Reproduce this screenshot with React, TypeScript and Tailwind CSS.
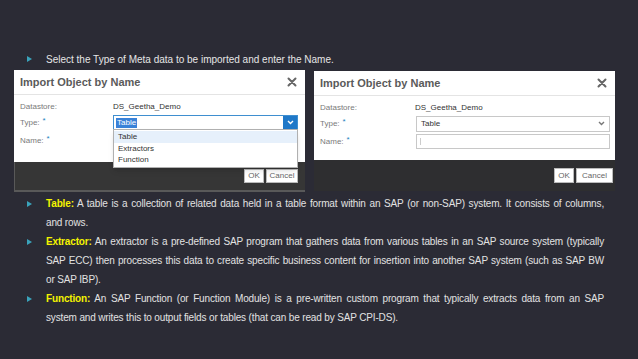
import React from 'react'

const font = { fontFamily: '"Liberation Sans", Arial, sans-serif' }

function Arrow() {
  return (
    <svg width="5" height="6" viewBox="0 0 5 6" className="shrink-0">
      <path d="M0 0 L5 3 L0 6 Z" fill="#3aa3bb" />
    </svg>
  )
}

function Close() {
  return (
    <svg width="10" height="10" viewBox="0 0 10 10">
      <path d="M1.5 1.5 L8.5 8.5 M8.5 1.5 L1.5 8.5" stroke="#666" strokeWidth="2" strokeLinecap="round" />
    </svg>
  )
}

function Chevron({ color }: { color: string }) {
  return (
    <svg width="7" height="5" viewBox="0 0 7 5">
      <path d="M1 1 L3.5 3.5 L6 1" stroke={color} strokeWidth="1.4" fill="none" />
    </svg>
  )
}

function Star() {
  return <span className="text-[#1f7fc0] text-[8px] ml-[3px] relative -top-[2px]">*</span>
}

function Dialog({ open }: { open: boolean }) {
  return (
    <div className={open ? 'w-[291px] flex flex-col' : 'w-[301px] flex flex-col mt-[1px]'}>
      <div className={open ? 'bg-white h-[92px] flex flex-col relative' : 'bg-white h-[89px] flex flex-col relative'}>
        <div className="h-[25px] flex items-center justify-between pl-[6px] pr-[8px] border-b border-[#e4e4e4]">
          <span className="text-[11px] font-bold text-[#5a5a5a]">Import Object by Name</span>
          <Close />
        </div>
        <div className="flex flex-col pl-[6px] pt-[5px] text-[8px] text-[#7a7a7a]">
          <div className="flex items-center h-[13px]">
            <span className={open ? 'w-[93px]' : 'w-[95px]'}>Datastore:</span>
            <span className="text-[#333]">DS_Geetha_Demo</span>
          </div>
          <div className="flex items-center h-[17px] mt-[1px]">
            <span className={open ? 'w-[93px]' : 'w-[96px]'}>
              Type:<Star />
            </span>
            {open ? (
              <div className="w-[185px] h-[15px] border border-[#3f8fd0] flex items-center justify-between">
                <span className="bg-[#3a82d8] text-white px-[1px] ml-[2px] leading-[10px]">Table</span>
                <div className="w-[14px] h-full bg-[#1f78c8] flex items-center justify-center">
                  <Chevron color="#ffffff" />
                </div>
              </div>
            ) : (
              <div className="w-[194px] h-[16px] border border-[#c8c8c8] flex items-center justify-between px-[4px] text-[#333]">
                <span>Table</span>
                <Chevron color="#777" />
              </div>
            )}
          </div>
          <div className="flex items-center h-[17px] mt-[1px]">
            <span className={open ? 'w-[93px]' : 'w-[96px]'}>
              Name:<Star />
            </span>
            {!open && (
              <div className="w-[194px] h-[15px] border border-[#c8c8c8] flex items-center pl-[3px]">
                <span className="w-px h-[7px] bg-[#ccc]" />
              </div>
            )}
          </div>
        </div>
        {open && (
          <div className="absolute left-[99px] top-[59px] w-[185px] bg-white border border-[#b0b0b0] shadow-md text-[8px] text-[#333] flex flex-col py-[1px] z-10">
            <div className="bg-[#e6f0fb] h-[12px] flex items-center pl-[4px]">Table</div>
            <div className="h-[11px] flex items-center pl-[4px]">Extractors</div>
            <div className="h-[12px] flex items-center pl-[4px]">Function</div>
          </div>
        )}
      </div>
      <div
        className={
          open
            ? 'h-[30px] bg-[#363636] border-l border-b-[2px] border-[#595959] flex items-center justify-end gap-[2px] pr-[7px]'
            : 'h-[31px] bg-[#2e2e30] flex items-center justify-end gap-[2px] pr-[2px]'
        }
      >
        <div className={open ? 'w-[20px] h-[14px] bg-white border border-[#bbb] text-[8px] text-[#666] flex items-center justify-center' : 'w-[20px] h-[15px] bg-white border border-[#bbb] text-[8px] text-[#666] flex items-center justify-center'}>
          OK
        </div>
        <div className={open ? 'w-[32px] h-[14px] bg-white border border-[#bbb] text-[8px] text-[#666] flex items-center justify-center' : 'w-[37px] h-[15px] bg-white border border-[#bbb] text-[8px] text-[#666] flex items-center justify-center'}>
          Cancel
        </div>
      </div>
    </div>
  )
}

function Item({ label, first, rest }: { label: string; first: string; rest: string[] }) {
  return (
    <div className="flex items-start">
      <div className="w-[46px] pl-[27px] h-[19px] flex items-center">
        <Arrow />
      </div>
      <div className="w-[558px] text-[10px] tracking-[-0.15px] leading-[19px] text-[#e2e2e2] flex flex-col">
        <span className="block whitespace-nowrap [text-align-last:justify]">
          <span className="font-bold text-[#f4f400]">{label}</span> {first}
        </span>
        {rest.map((line, i) => (
          <span
            key={i}
            className={i < rest.length - 1 ? 'block whitespace-nowrap [text-align-last:justify]' : 'block whitespace-nowrap'}
          >
            {line}
          </span>
        ))}
      </div>
    </div>
  )
}

export default function App() {
  return (
    <div className="w-[638px] h-[359px] bg-[#2b2b35] overflow-hidden flex flex-col pt-[51px]" style={font}>
      <div className="flex items-center h-[16px]">
        <div className="w-[46px] pl-[27px] flex items-center">
          <Arrow />
        </div>
        <span className="text-[10px] text-[#e6e6e6]">Select the Type of Meta data to be imported and enter the Name.</span>
      </div>
      <div className="flex items-start pl-[14px] gap-[9px] mt-[3px]">
        <Dialog open />
        <Dialog open={false} />
      </div>
      <div className="flex flex-col mt-[2px]">
        <Item
          label="Table:"
          first="A table is a collection of related data held in a table format within an SAP (or non-SAP) system. It consists of columns,"
          rest={['and rows.']}
        />
        <Item
          label="Extractor:"
          first="An extractor is a pre-defined SAP program that gathers data from various tables in an SAP source system (typically"
          rest={[
            'SAP ECC) then processes this data to create specific business content for insertion into another SAP system (such as SAP BW',
            'or SAP IBP).',
          ]}
        />
        <Item
          label="Function:"
          first="An SAP Function (or Function Module) is a pre-written custom program that typically extracts data from an SAP"
          rest={['system and writes this to output fields or tables (that can be read by SAP CPI-DS).']}
        />
      </div>
    </div>
  )
}
